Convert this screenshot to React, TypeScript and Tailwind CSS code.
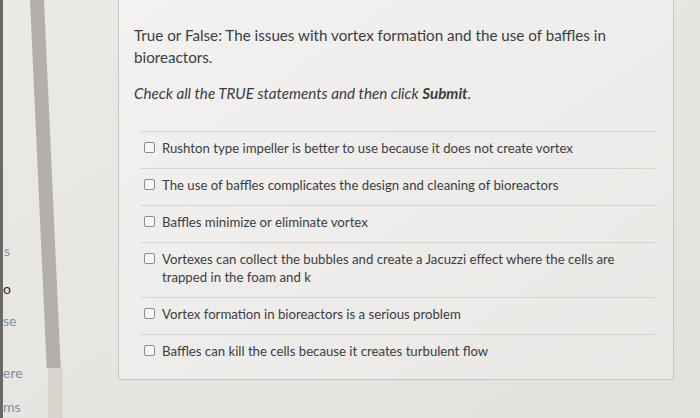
import React from "react";

const options: string[][] = [
  ["Rushton type impeller is better to use because it does not create vortex"],
  ["The use of baffles complicates the design and cleaning of bioreactors"],
  ["Baffles minimize or eliminate vortex"],
  ["Vortexes can collect the bubbles and create a Jacuzzi effect where the cells are", "trapped in the foam and k"],
  ["Vortex formation in bioreactors is a serious problem"],
  ["Baffles can kill the cells because it creates turbulent flow"],
];

function Checkbox() {
  return (
    <span className="mt-[3px] h-[11px] w-[11px] shrink-0 rounded-[2px] border-[1.5px] border-[#8c8c8a] bg-[#f7f7f5]" />
  );
}

export default function App() {
  return (
    <div
      className="flex h-[418px] w-[700px] overflow-hidden bg-gradient-to-br from-[#ebeae6] to-[#e3e1dc] text-[#3a3d41]"
      style={{ fontFamily: "Lato, 'Open Sans', sans-serif" }}
    >
      {/* Left sidebar fragment */}
      <div className="flex w-[118px] shrink-0">
        <div className="w-[3px] shrink-0 bg-[#6b6965]" />
        <div className="flex w-[22px] shrink-0 flex-col items-start justify-end pb-[3px] text-[14px] leading-[16px] text-[#7890a6]">
          <div className="mb-[22px] pl-[1px]">s</div>
          <div className="mb-[16px] text-[#2a2a2a]">o</div>
          <div className="mb-[36px]">se</div>
          <div className="mb-[18px]">ere</div>
          <div>ms</div>
        </div>
        <div className="ml-[5px] flex w-[36px] shrink-0 flex-col">
          <div className="h-[368px] w-[14px] origin-top skew-x-[2.6deg] bg-[#b4afa9]" />
          <div className="ml-[18px] h-[50px] w-[15px] bg-[#d9d6d0]" />
        </div>
      </div>

      {/* Main question panel */}
      <div className="h-[380px] w-[556px] shrink-0 border-x border-b border-[#c9c7c3] bg-gradient-to-br from-[#f3f2f0] via-[#eeedeb] to-[#e9e8e5] pl-[15px] pr-[18px] pt-[24px]">
        <p className="text-[15.2px] leading-[22px]">
          True or False: The issues with vortex formation and the use of baffles in
          <br />
          bioreactors.
        </p>
        <p className="mt-[14px] text-[15.2px] italic leading-[22px]">
          Check all the TRUE statements and then click <span className="font-bold">Submit</span>.
        </p>

        <div className="ml-[7px] mt-[27px]">
          {options.map((lines, i) => (
            <div
              key={i}
              className={`flex gap-[7px] pb-[11px] pl-[3px] pt-[7px] ${
                i < options.length - 1 ? "border-b border-[#d6d4d0]" : ""
              } ${i === 0 ? "border-t" : ""}`}
            >
              <Checkbox />
              <div className="text-[13.2px] leading-[18px]">
                {lines.map((l, j) => (
                  <div key={j}>{l}</div>
                ))}
              </div>
            </div>
          ))}
        </div>
      </div>
      <div className="flex-1" />
    </div>
  );
}
